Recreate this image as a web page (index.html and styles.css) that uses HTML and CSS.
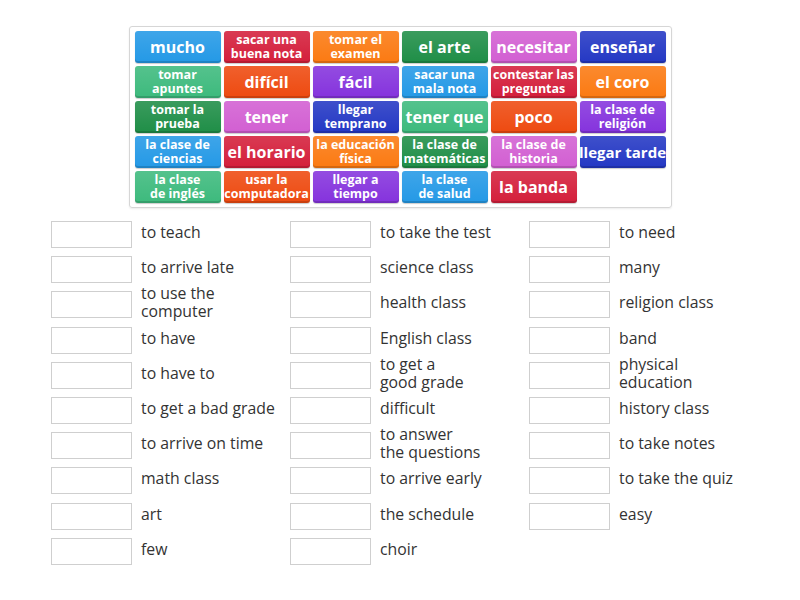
FILE: index.html
```html
<!DOCTYPE html>
<html lang="es">
<head>
  <meta charset="UTF-8" />
  <meta name="viewport" content="width=device-width, initial-scale=1.0" />
  <title>Match up</title>
  <link rel="stylesheet" href="styles.css">
</head>
<body>
  <div class="bank">
    <div class="tile c1">mucho</div>
    <div class="tile small c2">sacar una<br>buena nota</div>
    <div class="tile small c3">tomar el<br>examen</div>
    <div class="tile c4">el arte</div>
    <div class="tile c5">necesitar</div>
    <div class="tile c6">enseñar</div>

    <div class="tile small c7">tomar<br>apuntes</div>
    <div class="tile c8">difícil</div>
    <div class="tile c9">fácil</div>
    <div class="tile small c1">sacar una<br>mala nota</div>
    <div class="tile small c2">contestar las<br>preguntas</div>
    <div class="tile c3">el coro</div>

    <div class="tile small c4">tomar la<br>prueba</div>
    <div class="tile c5">tener</div>
    <div class="tile small c6">llegar<br>temprano</div>
    <div class="tile c7">tener que</div>
    <div class="tile c8">poco</div>
    <div class="tile small c9">la clase de<br>religión</div>

    <div class="tile small c1">la clase de<br>ciencias</div>
    <div class="tile c2">el horario</div>
    <div class="tile small c3">la educación<br>física</div>
    <div class="tile small c4">la clase de<br>matemáticas</div>
    <div class="tile small c5">la clase de<br>historia</div>
    <div class="tile mid c6">llegar tarde</div>

    <div class="tile small c7">la clase<br>de inglés</div>
    <div class="tile small c8">usar la<br>computadora</div>
    <div class="tile small c9">llegar a<br>tiempo</div>
    <div class="tile small c1">la clase<br>de salud</div>
    <div class="tile c2">la banda</div>
  </div>

  <div class="targets">
    <div class="col">
      <div class="row"><div class="slot"></div><div class="label">to teach</div></div>
      <div class="row"><div class="slot"></div><div class="label">to arrive late</div></div>
      <div class="row"><div class="slot"></div><div class="label">to use the<br>computer</div></div>
      <div class="row"><div class="slot"></div><div class="label">to have</div></div>
      <div class="row"><div class="slot"></div><div class="label">to have to</div></div>
      <div class="row"><div class="slot"></div><div class="label">to get a bad grade</div></div>
      <div class="row"><div class="slot"></div><div class="label">to arrive on time</div></div>
      <div class="row"><div class="slot"></div><div class="label">math class</div></div>
      <div class="row"><div class="slot"></div><div class="label">art</div></div>
      <div class="row"><div class="slot"></div><div class="label">few</div></div>
    </div>
    <div class="col">
      <div class="row"><div class="slot"></div><div class="label">to take the test</div></div>
      <div class="row"><div class="slot"></div><div class="label">science class</div></div>
      <div class="row"><div class="slot"></div><div class="label">health class</div></div>
      <div class="row"><div class="slot"></div><div class="label">English class</div></div>
      <div class="row"><div class="slot"></div><div class="label">to get a<br>good grade</div></div>
      <div class="row"><div class="slot"></div><div class="label">difficult</div></div>
      <div class="row"><div class="slot"></div><div class="label">to answer<br>the questions</div></div>
      <div class="row"><div class="slot"></div><div class="label">to arrive early</div></div>
      <div class="row"><div class="slot"></div><div class="label">the schedule</div></div>
      <div class="row"><div class="slot"></div><div class="label">choir</div></div>
    </div>
    <div class="col">
      <div class="row"><div class="slot"></div><div class="label">to need</div></div>
      <div class="row"><div class="slot"></div><div class="label">many</div></div>
      <div class="row"><div class="slot"></div><div class="label">religion class</div></div>
      <div class="row"><div class="slot"></div><div class="label">band</div></div>
      <div class="row"><div class="slot"></div><div class="label">physical<br>education</div></div>
      <div class="row"><div class="slot"></div><div class="label">history class</div></div>
      <div class="row"><div class="slot"></div><div class="label">to take notes</div></div>
      <div class="row"><div class="slot"></div><div class="label">to take the quiz</div></div>
      <div class="row"><div class="slot"></div><div class="label">easy</div></div>
    </div>
  </div>
</body>
</html>
```

FILE: styles.css
```css
body {
  margin: 0;
  background-color: #fff;
  font-family: "Open Sans", "Liberation Sans", sans-serif;
}
.bank {
  width: 531px;
  margin: 26px auto 0;
  padding: 4px 5px;
  border: 1px solid #d6d6d6;
  border-radius: 3px;
  box-shadow: 0 1px 2px rgba(0,0,0,0.08);
  display: grid;
  grid-template-columns: repeat(6, 86px);
  grid-auto-rows: 32px;
  gap: 3px;
}
.tile {
  display: flex;
  align-items: center;
  justify-content: center;
  text-align: center;
  color: #fff;
  font-weight: 700;
  font-size: 16px;
  border-radius: 3px;
  box-shadow: inset 0 -2px 0 rgba(0,0,0,0.15), 0 1px 1px rgba(0,0,0,0.2);
  background-image: linear-gradient(rgba(255,255,255,0.12), rgba(255,255,255,0));
  white-space: nowrap;
}
.tile.small {
  font-size: 12.5px;
  line-height: 13.5px;
  padding-bottom: 1px;
}
.tile.mid {
  font-size: 15px;
}
.c1 { background-color: #2499e6; }
.c2 { background-color: #d41f3b; }
.c3 { background-color: #fb7a12; }
.c4 { background-color: #1f8e47; }
.c5 { background-color: #d25fd2; }
.c6 { background-color: #2438c4; }
.c7 { background-color: #3dba7d; }
.c8 { background-color: #ee4a10; }
.c9 { background-color: #8533dd; }

.targets {
  display: flex;
  padding-left: 51px;
  margin-top: 13px;
}
.col {
  width: 239px;
  display: flex;
  flex-direction: column;
  gap: 8.2px;
}
.row {
  display: flex;
  align-items: center;
  height: 27px;
}
.slot {
  width: 79px;
  height: 25px;
  border: 1px solid #cfcfcf;
  flex-shrink: 0;
}
.label {
  margin-left: 9px;
  padding-bottom: 5px;
  font-size: 15.8px;
  line-height: 18px;
  color: #333;
  white-space: nowrap;
}
```
